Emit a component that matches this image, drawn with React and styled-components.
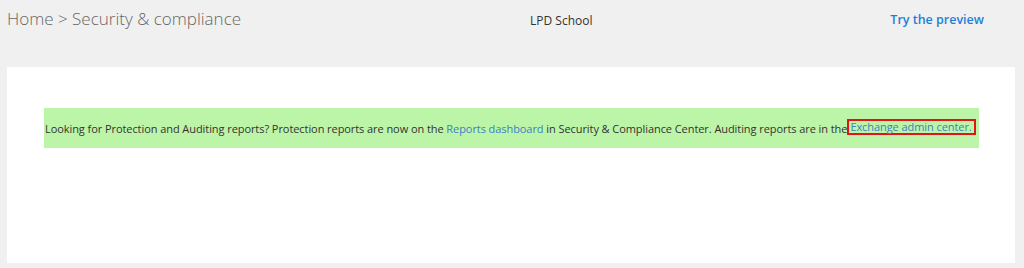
import React from 'react'
import styled, { createGlobalStyle } from 'styled-components'

const GlobalStyle = createGlobalStyle`
  html, body {
    margin: 0;
    padding: 0;
    background: #f0f0f0;
    font-family: "Open Sans", "Noto Sans", sans-serif;
  }
`

const Page = styled.div`
  width: 1024px;
  height: 268px;
  display: flex;
  flex-direction: column;
  overflow: hidden;
`

const Header = styled.div`
  height: 67px;
  display: flex;
  align-items: flex-start;
  padding: 0 40px 0 7px;
  box-sizing: border-box;
`

const Breadcrumb = styled.div`
  font-size: 17px;
  font-weight: 300;
  color: #666;
  line-height: 22px;
  margin-top: 8px;
  width: 420px;
`

const Tenant = styled.div`
  flex: 1;
  font-size: 12px;
  color: #333;
  margin-top: 12px;
  line-height: 18px;
  padding-left: 103px;
`

const Preview = styled.a`
  font-size: 12.5px;
  font-weight: 600;
  color: #1e7fd8;
  margin-top: 11px;
  line-height: 18px;
  text-decoration: none;
`

const Panel = styled.div`
  background: #fff;
  margin: 0 9px 0 7px;
  height: 196px;
  padding: 41px 36px 0 37px;
  box-sizing: border-box;
`

const Notice = styled.div`
  background: #bdf5a8;
  height: 40px;
  display: flex;
  align-items: center;
  font-size: 11px;
  letter-spacing: -0.07px;
  color: #333;
  white-space: nowrap;
  padding-left: 1px;
`

const Link = styled.a`
  color: #3b7fc4;
  text-decoration: none;
  display: ${p => (p.marked ? 'inline-block' : 'inline')};
  line-height: ${p => (p.marked ? '12px' : 'inherit')};
  border: ${p => (p.marked ? '2px solid #e3131c' : 'none')};
  padding: ${p => (p.marked ? '0 2px 0 1px' : '0')};
  margin-top: ${p => (p.marked ? '-2px' : '0')};
`

export default function App() {
  return (
    <Page>
      <GlobalStyle />
      <Header>
        <Breadcrumb>Home &gt; Security &amp; compliance</Breadcrumb>
        <Tenant>LPD School</Tenant>
        <Preview>Try the preview</Preview>
      </Header>
      <Panel>
        <Notice>
          Looking for Protection and Auditing reports? Protection reports are now on the&nbsp;
          <Link>Reports dashboard</Link>
          &nbsp;in Security &amp; Compliance Center. Auditing reports are in the
          <Link marked>Exchange admin center.</Link>
        </Notice>
      </Panel>
    </Page>
  )
}
